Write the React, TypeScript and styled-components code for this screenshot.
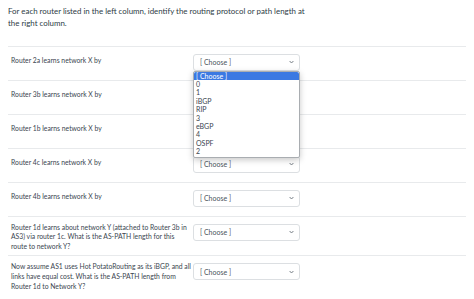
import React from 'react'
import styled, { createGlobalStyle } from 'styled-components'

const GlobalStyle = createGlobalStyle`
  html, body {
    margin: 0;
    padding: 0;
    background: #ffffff;
  }
  body {
    font-family: Lato, "Open Sans", sans-serif;
    color: #2d3b45;
  }
`

const Page = styled.div`
  padding: 5px 8px 0 8px;
  width: 458px;
`

const Prompt = styled.p`
  margin: 0 0 16px 0;
  font-size: 7.9px;
  line-height: 12.3px;
  color: #2d3b45;
  width: 302px;
`

const Rows = styled.div`
  display: flex;
  flex-direction: column;
`

const Row = styled.div`
  position: relative;
  display: flex;
  align-items: flex-start;
  border-top: 1px solid #e8eaec;
  padding: 6px 3px 4px 3px;
`

const Label = styled.div<{ $single?: boolean }>`
  width: 182px;
  flex-shrink: 0;
  font-size: 6.8px;
  line-height: 9.6px;
  color: #3a454f;
  white-space: pre-line;
  padding-top: ${(p) => (p.$single ? '3px' : '0')};
`

// selects under the open list are not visible in the shot
const SelectBox = styled.div<{ $covered?: boolean }>`
  position: relative;
  width: 107px;
  height: 17px;
  box-sizing: border-box;
  margin: 1px 0 5px 0;
  border: 1px solid #dcdfe2;
  border-radius: 3px;
  background: #ffffff;
  display: flex;
  align-items: center;
  justify-content: space-between;
  padding: 0 5px 0 6px;
  font-size: 7px;
  color: #4a545c;
  visibility: ${(p) => (p.$covered ? 'hidden' : 'visible')};
`

const Chevron = () => (
  <svg width="5" height="4" viewBox="0 0 5 4">
    <path d="M0.6 1 L2.5 3 L4.4 1" fill="none" stroke="#6a737b" strokeWidth="0.9" />
  </svg>
)

const Menu = styled.ul`
  position: absolute;
  top: 24px;
  left: 185px;
  z-index: 5;
  width: 107px;
  box-sizing: border-box;
  margin: 0;
  padding: 0 0 1px 0;
  list-style: none;
  background: #ffffff;
  border: 1px solid #a9adb1;
  border-radius: 2px;
  box-shadow: 0 2px 6px rgba(0, 0, 0, 0.22);
`

const MenuItem = styled.li<{ $active?: boolean }>`
  height: 8.4px;
  line-height: 8.4px;
  padding: 0 2px;
  font-size: 7px;
  color: ${(p) => (p.$active ? '#ffffff' : '#3a454f')};
  background: ${(p) => (p.$active ? '#3b79e2' : 'transparent')};
  border-radius: ${(p) => (p.$active ? '2px 2px 0 0' : '0')};
`

const options = ['[ Choose ]', '0', '1', 'iBGP', 'RIP', '3', 'eBGP', '4', 'OSPF', '2']

const questions = [
  'Router 2a learns network X by',
  'Router 3b learns network X by',
  'Router 1b learns network X by',
  'Router 4c learns network X by',
  'Router 4b learns network X by',
  'Router 1d learns about network Y (attached to Router 3b in AS3) via router 1c. What is the AS-PATH length for this\nroute to network Y?',
  'Now assume AS1 uses Hot PotatoRouting as its iBGP, and all links have equal cost. What is the AS-PATH length from Router 1d to Network Y?',
]

const App = () => {
  return (
    <Page>
      <GlobalStyle />
      <Prompt>
        For each router listed in the left column, identify the routing protocol or path length at the right column.
      </Prompt>
      <Rows>
        {questions.map((q, i) => (
          <Row key={i}>
            <Label $single={q.length < 40}>{q}</Label>
            <SelectBox $covered={i === 1 || i === 2}>
              <span>[ Choose ]</span>
              <Chevron />
            </SelectBox>
            {i === 0 && (
              <Menu>
                {options.map((o, j) => (
                  <MenuItem key={j} $active={j === 0}>{o}</MenuItem>
                ))}
              </Menu>
            )}
          </Row>
        ))}
      </Rows>
    </Page>
  )
}

export default App
